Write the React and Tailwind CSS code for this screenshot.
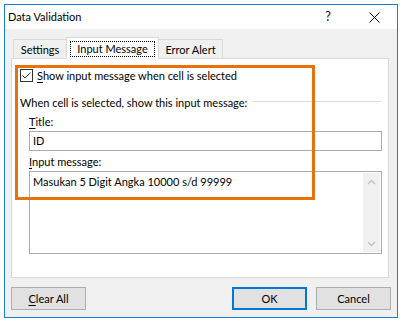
import React from "react";

function Chevron({ up }) {
  return (
    <svg width="9" height="6" viewBox="0 0 9 6" className="block">
      {up ? (
        <path d="M1 5 L4.5 1.5 L8 5" fill="none" stroke="#c2c2c2" strokeWidth="1.4" />
      ) : (
        <path d="M1 1 L4.5 4.5 L8 1" fill="none" stroke="#c2c2c2" strokeWidth="1.4" />
      )}
    </svg>
  );
}

export default function App() {
  return (
    <div className="relative w-[403px] h-[326px] bg-white pt-[4px] pl-[4px] text-[11px] leading-[16px] text-black font-['Lato',sans-serif]">
      <div className="w-[394px] h-[314px] border border-[#1a7fd4] bg-[#f0f0f0] flex flex-col">
        {/* title bar */}
        <div className="h-[24px] bg-white flex items-center shrink-0">
          <span className="pl-[3px] flex-1">Data Validation</span>
          <div className="w-[46px] h-full flex items-center justify-center text-[12.5px]">?</div>
          <div className="w-[46px] h-full flex items-center justify-center">
            <svg width="11" height="11" viewBox="0 0 11 11" className="block">
              <path d="M0.5 0.5 L10.5 10.5 M10.5 0.5 L0.5 10.5" stroke="#000" strokeWidth="1" />
            </svg>
          </div>
        </div>

        {/* body */}
        <div className="flex-1 pl-[6px] pt-[8px] flex flex-col">
          {/* tabs */}
          <div className="relative z-10 flex items-end h-[21px] pl-[2px]">
            <div className="w-[53px] h-[19px] border-l border-t border-[#d9d9d9] flex items-center justify-center pt-[2px]">
              Settings
            </div>
            <div className="w-[93px] h-[22px] -mb-[1px] bg-white border-x border-t border-[#d9d9d9] pt-[3px] px-[3px]">
              <div className="h-[16px] border border-dotted border-black flex items-center justify-center">
                Input Message
              </div>
            </div>
            <div className="w-[64px] h-[19px] border-t border-r border-[#d9d9d9] flex items-center justify-center pt-[2px]">
              Error Alert
            </div>
          </div>

          {/* panel */}
          <div className="w-[378px] h-[220px] border border-[#d9d9d9] bg-white pt-[10px] pl-[8px] pr-[6px] flex flex-col">
            <div className="flex items-center h-[13px]">
              <div className="w-[13px] h-[13px] border border-[#333] bg-white flex items-center justify-center">
                <svg width="11" height="11" viewBox="0 0 11 11" className="block">
                  <path d="M1.5 5.5 L4 8 L9.5 2.5" fill="none" stroke="#333" strokeWidth="1" />
                </svg>
              </div>
              <span className="ml-[4px]">
                <span className="underline underline-offset-[2px]">S</span>how input message when cell is selected
              </span>
            </div>

            <div className="mt-[13px] flex items-center h-[16px]">
              <span>When cell is selected, show this input message:</span>
              <div className="flex-1 h-px bg-[#dcdcdc] ml-[6px] mb-[3px]" />
            </div>

            <div className="ml-[9px] mt-[3px] h-[16px]">
              <span className="underline underline-offset-[2px]">T</span>itle:
            </div>
            <div className="ml-[9px] mt-[1px] w-[353px] h-[20px] border border-[#ababab] pl-[3px] flex items-center">
              ID
            </div>

            <div className="ml-[9px] mt-[3px] h-[16px]">
              <span className="underline underline-offset-[2px]">I</span>nput message:
            </div>
            <div className="ml-[9px] mt-[1px] w-[353px] h-[83px] border border-[#ababab] flex">
              <div className="flex-1 pl-[3px] pt-[2px]">Masukan 5 Digit Angka 10000 s/d 99999</div>
              <div className="w-[17px] my-[1px] mr-[1px] bg-[#f0f0f0] flex flex-col justify-between">
                <div className="h-[17px] flex items-center justify-center">
                  <Chevron up />
                </div>
                <div className="h-[17px] flex items-center justify-center">
                  <Chevron />
                </div>
              </div>
            </div>
          </div>

          {/* buttons */}
          <div className="mt-[9px] w-[380px] flex">
            <div className="w-[75px] h-[23px] border border-[#adadad] bg-[#e1e1e1] flex items-center justify-center">
              <span>
                <span className="underline underline-offset-[2px]">C</span>lear All
              </span>
            </div>
            <div className="flex-1" />
            <div className="w-[75px] h-[23px] border-2 border-[#0078d7] bg-[#e1e1e1] flex items-center justify-center">
              OK
            </div>
            <div className="ml-[9px] w-[75px] h-[23px] border border-[#adadad] bg-[#e1e1e1] flex items-center justify-center">
              Cancel
            </div>
          </div>
        </div>
      </div>

      {/* annotation overlay */}
      <div className="absolute left-[15px] top-[65px] w-[300px] h-[135px] border-[3px] border-[#e8710b] pointer-events-none" />
    </div>
  );
}
